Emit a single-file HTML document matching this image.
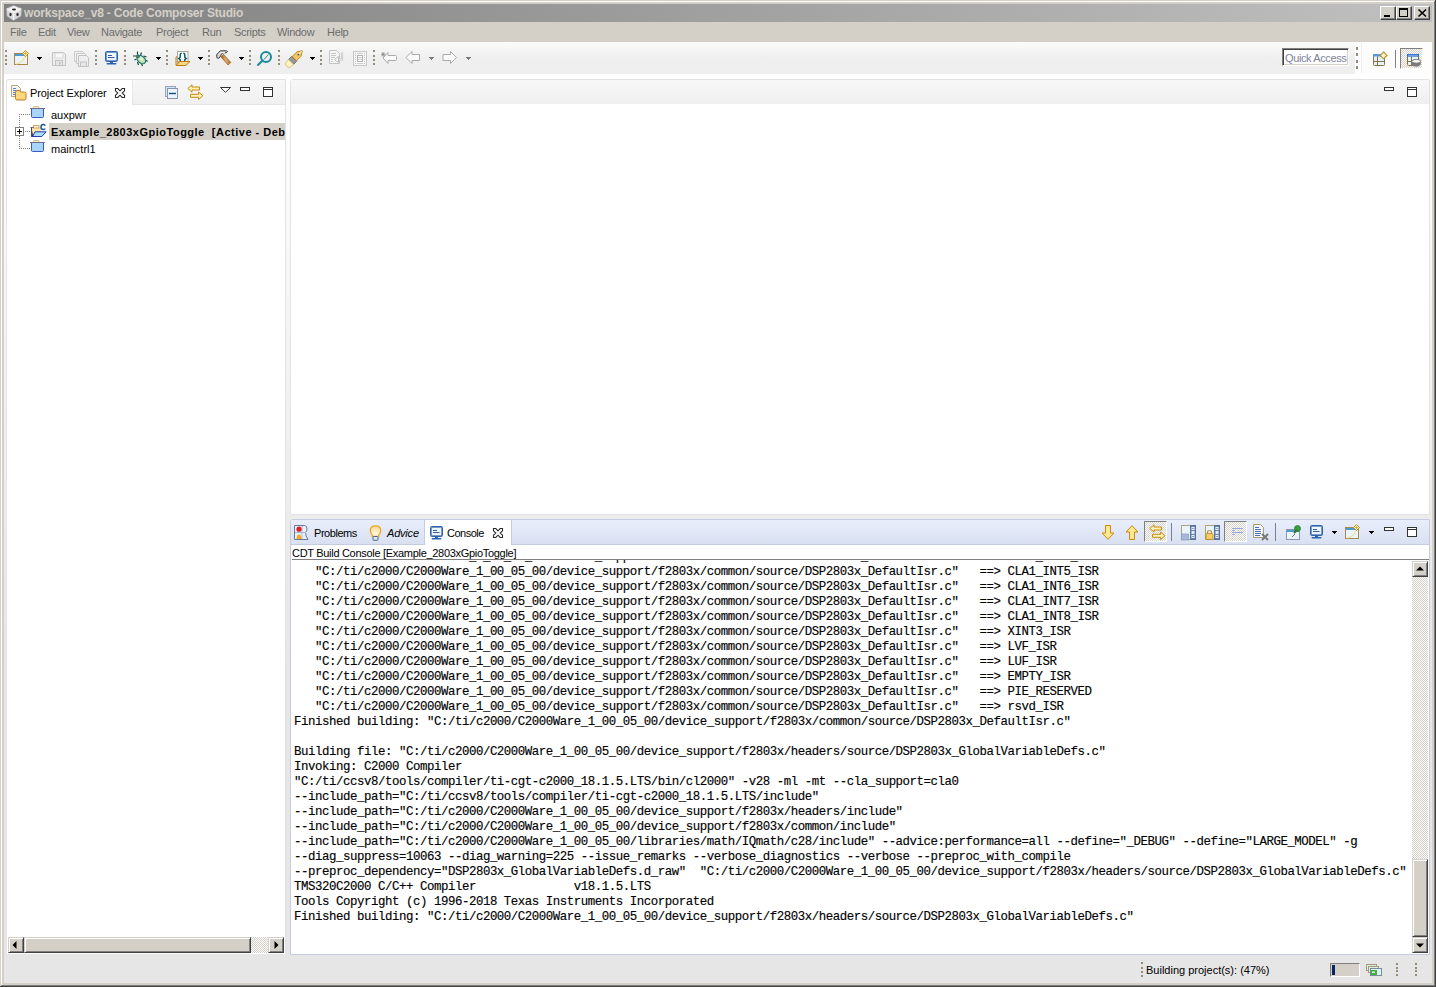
<!DOCTYPE html>
<html><head><meta charset="utf-8">
<style>
*{box-sizing:border-box}
html,body{margin:0;padding:0}
body{width:1436px;height:987px;overflow:hidden;position:relative;background:#d4d0c8;font-family:"Liberation Sans",sans-serif;}
.a{position:absolute}
.t{position:absolute;white-space:pre;line-height:1}
svg{position:absolute;overflow:visible}
.grip{position:absolute;width:2px;height:16px;background:linear-gradient(#948c7a 0 2px,transparent 2px 5px,#948c7a 5px 7px,transparent 7px 9px,#948c7a 9px 11px,transparent 11px 13px,#948c7a 13px 15px,transparent 15px)}
.dd{position:absolute;width:5px;height:3px;--c:#000;background:linear-gradient(var(--c),var(--c)) 0 0/5px 1px no-repeat,linear-gradient(var(--c),var(--c)) 1px 1px/3px 1px no-repeat,linear-gradient(var(--c),var(--c)) 2px 2px/1px 1px no-repeat}
.ddg{--c:#7a7a7a}
.cap{position:absolute;width:16px;height:14px;background:#d4d0c8;border-top:1px solid #fff;border-left:1px solid #fff;border-right:1px solid #404040;border-bottom:1px solid #404040;box-shadow:inset -1px -1px 0 #808080}
.sb{position:absolute;background:#d4d0c8;border-top:1px solid #d4d0c8;border-left:1px solid #d4d0c8;border-right:1px solid #404040;border-bottom:1px solid #404040;box-shadow:inset 1px 1px 0 #fff,inset -1px -1px 0 #808080}
.dither{background-color:#fff;background-image:linear-gradient(45deg,#d4d0c8 25%,transparent 25%,transparent 75%,#d4d0c8 75%),linear-gradient(45deg,#d4d0c8 25%,transparent 25%,transparent 75%,#d4d0c8 75%);background-size:2px 2px;background-position:0 0,1px 1px}
.mono{font-family:"Liberation Mono",monospace;font-size:12.4px;letter-spacing:-0.44px;color:#000;-webkit-text-stroke:0.15px #000}
.g2{height:13px;background:linear-gradient(#948c7a 0 2px,transparent 2px 4px,#948c7a 4px 6px,transparent 6px 7px,#948c7a 7px 9px,transparent 9px 11px,#948c7a 11px 13px)}
.cl{position:absolute;left:294px;height:15px;line-height:15px;white-space:pre}
</style></head><body>

<!-- window frame -->
<div class="a" style="left:1px;top:1px;width:1433px;height:1px;background:#fff"></div>
<div class="a" style="left:1px;top:1px;width:1px;height:984px;background:#fff"></div>
<div class="a" style="left:1434px;top:1px;width:1px;height:985px;background:#808080"></div>
<div class="a" style="left:1px;top:985px;width:1434px;height:1px;background:#808080"></div>
<div class="a" style="left:1435px;top:0;width:1px;height:987px;background:#404040"></div>
<div class="a" style="left:0;top:986px;width:1436px;height:1px;background:#404040"></div>

<!-- title bar -->
<div class="a" style="left:4px;top:4px;width:1428px;height:18px;background:linear-gradient(90deg,#808080,#c0c0c0)"></div>
<svg style="left:6px;top:5px" width="16" height="16" viewBox="0 0 16 16">
 <path d="M7.5 0.5 L15.5 3.5 L15 11 L7.5 15.5 L1 11 L0.5 3.5 Z" fill="#dadada" stroke="#b0b0b0" stroke-width="0.6"/><path d="M7.5 7.5 L7.5 15 M1 3.8 L7.5 7.5 L15.2 3.8" stroke="#f4f4f4" stroke-width="1.2" fill="none"/>
 <path d="M8 1 L15 4.5 L8 8 L1 4.5 Z" fill="#f4f4f4"/>
 <ellipse cx="8" cy="4.4" rx="2" ry="1" fill="#222"/>
 <ellipse cx="4.5" cy="9.5" rx="1.2" ry="1.8" fill="#333"/>
 <ellipse cx="11.5" cy="9.5" rx="1.2" ry="1.8" fill="#333"/>
</svg>
<div class="t" style="left:24px;top:7px;font-weight:bold;font-size:12px;letter-spacing:-0.2px;color:#d4d0c8">workspace_v8 - Code Composer Studio</div>
<div class="cap" style="left:1380px;top:6px"><div class="a" style="left:3px;top:8px;width:6px;height:2px;background:#000"></div></div>
<div class="cap" style="left:1396px;top:6px"><div class="a" style="left:2px;top:1px;width:9px;height:9px;border:1px solid #000;border-top-width:2px"></div></div>
<div class="cap" style="left:1414px;top:6px"><svg style="left:3px;top:2px" width="9" height="8" viewBox="0 0 9 8"><path d="M0.5 0.5L8 7.5M8 0.5L0.5 7.5" stroke="#000" stroke-width="1.6"/></svg></div>

<!-- menu bar -->
<div class="t" style="left:10px;top:27px;font-size:11px;letter-spacing:-0.3px;color:#6d6d6d">File</div>
<div class="t" style="left:38px;top:27px;font-size:11px;letter-spacing:-0.3px;color:#6d6d6d">Edit</div>
<div class="t" style="left:67px;top:27px;font-size:11px;letter-spacing:-0.3px;color:#6d6d6d">View</div>
<div class="t" style="left:101px;top:27px;font-size:11px;letter-spacing:-0.3px;color:#6d6d6d">Navigate</div>
<div class="t" style="left:156px;top:27px;font-size:11px;letter-spacing:-0.3px;color:#6d6d6d">Project</div>
<div class="t" style="left:202px;top:27px;font-size:11px;letter-spacing:-0.3px;color:#6d6d6d">Run</div>
<div class="t" style="left:234px;top:27px;font-size:11px;letter-spacing:-0.3px;color:#6d6d6d">Scripts</div>
<div class="t" style="left:277px;top:27px;font-size:11px;letter-spacing:-0.3px;color:#6d6d6d">Window</div>
<div class="t" style="left:327px;top:27px;font-size:11px;letter-spacing:-0.3px;color:#6d6d6d">Help</div>

<!-- toolbar -->
<div class="a" style="left:4px;top:42px;width:1351px;height:32px;background:linear-gradient(#fbfbfb,#efefef 50%,#efefef)"></div>
<div class="a" style="left:1355px;top:42px;width:77px;height:32px;background:#fdfdfd"></div>
<div class="a" style="left:1361px;top:43px;width:1px;height:30px;background:#eeeeee"></div>
<!-- toolbar items -->
<div class="grip" style="left:5px;top:50px"></div>
<svg style="left:14px;top:50px" width="16" height="16" viewBox="0 0 16 16">
 <rect x="0.5" y="3.5" width="13" height="11" fill="#eaf4fc" stroke="#a8894a"/>
 <rect x="1" y="4" width="12" height="2" fill="#4a9ad8"/>
 <path d="M2 14 Q9 13 11 6" stroke="#f0e0a0" stroke-width="1.2" fill="none"/>
 <path d="M11.5 0.5 L14.5 3.5 L11.5 6.5 L8.5 3.5 Z" fill="#fff5c0" stroke="#b8902a"/>
 <path d="M11.5 2 V5 M10 3.5 H13" stroke="#d4a030" stroke-width="0.8"/>
</svg>
<div class="dd" style="left:37px;top:57px"></div>
<svg style="left:51px;top:51px" width="16" height="16" viewBox="0 0 16 16">
 <path d="M1.5 1.5 H12.5 L14.5 3.5 V14.5 H1.5 Z" fill="#eeeeee" stroke="#c2c2c2"/>
 <rect x="4" y="2" width="8" height="5" fill="#f8f8f8" stroke="#cfcfcf" stroke-width="0.7"/>
 <rect x="4.5" y="9.5" width="7" height="5" fill="#e6e6e6" stroke="#c2c2c2"/>
 <rect x="8" y="11" width="1.5" height="2.5" fill="#c2c2c2"/>
</svg>
<svg style="left:74px;top:51px" width="16" height="16" viewBox="0 0 16 16">
 <path d="M0.5 0.5 H8.5 L10.5 2.5 V10.5 H0.5 Z" fill="#f2f2f2" stroke="#cccccc"/>
 <path d="M2.5 2.5 H10.5 L12.5 4.5 V12.5 H2.5 Z" fill="#f2f2f2" stroke="#c8c8c8"/>
 <path d="M4.5 4.5 H12.5 L14.5 6.5 V15.5 H4.5 Z" fill="#eeeeee" stroke="#c2c2c2"/>
 <rect x="6.5" y="11" width="6" height="4.5" fill="#e6e6e6" stroke="#c2c2c2"/>
</svg>
<div class="grip" style="left:95px;top:50px"></div>
<svg style="left:105px;top:51px" width="14" height="14" viewBox="0 0 14 14">
 <rect x="0.75" y="0.75" width="11.5" height="9.5" rx="1.5" fill="#eaf6fe" stroke="#2a62b0" stroke-width="1.5"/>
 <rect x="1.5" y="1.5" width="10" height="8" fill="none" stroke="#7890b8" stroke-width="0.6"/>
 <rect x="3" y="4" width="4" height="1" fill="#3a5aa0"/>
 <rect x="3" y="6" width="6.5" height="1" fill="#3a5aa0"/>
 <rect x="5" y="10.5" width="3" height="1.5" fill="#2a62b0"/>
 <rect x="1.5" y="12" width="10" height="1.6" rx="0.8" fill="#2a62b0"/>
</svg>
<div class="grip" style="left:124px;top:50px"></div>
<svg style="left:133px;top:51px" width="16" height="16" viewBox="0 0 16 16">
 <defs><radialGradient id="bugg" cx="0.45" cy="0.45" r="0.6"><stop offset="0" stop-color="#f0f8e8"/><stop offset="1" stop-color="#98d080"/></radialGradient></defs>
 <path d="M4.5 0.5 V3.5 M8.5 1.5 L7.5 4.5 M0 5 H3 M1.5 9 L3.5 8 M10.5 5 L13.5 6 M12.5 9 L14.5 10.5 M4.5 11 L5.5 14 M8.5 12.5 L9.5 15" stroke="#1e4a36" stroke-width="1.2" fill="none"/>
 <ellipse cx="8.3" cy="8.6" rx="4.9" ry="3.4" transform="rotate(42 8.3 8.6)" fill="url(#bugg)" stroke="#1a6a80" stroke-width="1.1"/>
 <circle cx="4.9" cy="5.3" r="1.6" fill="#3a8a50" stroke="#1a6a80" stroke-width="0.8"/>
</svg>
<div class="dd" style="left:156px;top:57px"></div>
<div class="grip" style="left:166px;top:50px"></div>
<svg style="left:175px;top:51px" width="16" height="16" viewBox="0 0 16 16">
 <path d="M1 14.5 V6.5 Q1 5.5 2 5.5 H3 V14.5 Z" fill="#fbe49a" stroke="#c07a20" stroke-width="1"/>
 <rect x="2.5" y="0.5" width="10.5" height="10" fill="#fff" stroke="#a8a898"/>
 <path d="M6.7 2.3 Q5.2 2.3 5.2 3.8 V6.2 L3.8 7.4 L5.2 8.6 V10.5 M8.3 2.3 Q9.8 2.3 9.8 3.8 V6.2 L11.2 7.4 L9.8 8.6 V10.5" stroke="#0a5a72" stroke-width="1.5" fill="none"/>
 <path d="M1.5 14.5 H10.8 L15 10.5 H4.5 Z" fill="#f8d880" stroke="#c07a18" stroke-width="1"/>
</svg>
<div class="dd" style="left:198px;top:57px"></div>
<div class="grip" style="left:208px;top:50px"></div>
<svg style="left:216px;top:50px" width="16" height="16" viewBox="0 0 16 16">
 <defs><linearGradient id="hdl" x1="0" y1="0" x2="1" y2="0"><stop offset="0" stop-color="#9a5a20"/><stop offset="0.5" stop-color="#e0b070"/><stop offset="1" stop-color="#a86a28"/></linearGradient></defs>
 <path d="M5 7 L7.5 4.2 L14.8 12.5 L12 15 Z" fill="url(#hdl)" stroke="#8a5018" stroke-width="0.6"/>
 <path d="M4.3 0.8 H10.6 L11.6 1.6 L10.2 2.8 H6.8 L5.6 4.2 L4 7 L2.5 8.4 L1.2 8 L0.6 6.5 L0.8 4.5 L2.6 2.5 Z" fill="#cfcfcf" stroke="#3a3a3a" stroke-width="1"/>
 <path d="M3 4.5 L5 2.5 H9" stroke="#f4f4f4" stroke-width="1" fill="none"/>
</svg>
<div class="dd" style="left:239px;top:57px"></div>
<div class="grip" style="left:249px;top:50px"></div>
<svg style="left:257px;top:51px" width="16" height="16" viewBox="0 0 16 16">
 <circle cx="9" cy="6" r="5" fill="none" stroke="#1a8a9a" stroke-width="2"/>
 <path d="M5.5 9.5 L1 14" stroke="#1a8a9a" stroke-width="2" stroke-linecap="round"/>
 <path d="M7 8.5 L11.5 3.5" stroke="#1a8a9a" stroke-width="1"/>
</svg>
<div class="grip" style="left:278px;top:50px"></div>
<svg style="left:286px;top:50px" width="17" height="17" viewBox="0 0 17 17">
 <g transform="rotate(45 8.5 8.5)">
  <path d="M8.5 -2.5 L11.5 2 V9 H5.5 V2 Z" fill="#f6c458" stroke="#b88a30" stroke-width="0.9"/>
  <path d="M8.5 -1.5 V3" stroke="#fff2c0" stroke-width="1"/>
  <circle cx="8.5" cy="3" r="0.9" fill="#2a5aa0"/>
  <rect x="5" y="9" width="7" height="4.5" fill="#9a9a9a" stroke="#6f6a60" stroke-width="0.8"/>
  <path d="M5.2 13.5 H11.8 V17 Q11.8 19.5 8.5 19.5 Q5.2 19.5 5.2 17 Z" fill="#fff6c8" stroke="#d8b860" stroke-width="0.8"/>
 </g>
</svg>
<div class="dd" style="left:310px;top:57px"></div>
<div class="grip" style="left:320px;top:50px"></div>
<svg style="left:329px;top:50px" width="16" height="16" viewBox="0 0 16 16">
 <path d="M0.5 0.5 H7.5 L10.5 3.5 V13.5 H0.5 Z" fill="#f6f6f6" stroke="#c4c4c4"/>
 <path d="M2 3.5 H7 M2 5.5 H7 M2 7.5 H6 M2 9.5 H4 M2 11.5 H4" stroke="#c4c4c4" stroke-width="0.9"/>
 <path d="M13 2.5 V9.5 H8.5" stroke="#c4c4c4" stroke-width="2.2" fill="none"/>
 <path d="M13 2.5 V9.5 H8.5" stroke="#fbfbfb" stroke-width="0.6" fill="none"/>
 <path d="M9.5 6.5 L5.5 9.5 L9.5 12.5 Z" fill="#fafafa" stroke="#c0c0c0" stroke-linejoin="round"/>
</svg>
<svg style="left:353px;top:51px" width="14" height="15" viewBox="0 0 14 15">
 <rect x="0.5" y="0.5" width="13" height="14" fill="#f6f6f6" stroke="#c8c8c8"/>
 <path d="M2.5 2 V13" stroke="#c4c4c4" stroke-dasharray="1 1"/>
 <path d="M11.5 2 V13" stroke="#c4c4c4" stroke-dasharray="1 1"/>
 <path d="M4 2.5 H10 M4 12.5 H10" stroke="#c8c8c8" stroke-width="0.9"/>
 <rect x="4.5" y="4.5" width="5" height="6" fill="#fafafa" stroke="#b4b4b4"/>
 <path d="M5 6.5 H9 M5 8.5 H9" stroke="#c0c0c0" stroke-width="0.8"/>
</svg>
<div class="grip" style="left:373px;top:50px"></div>
<svg style="left:381px;top:50px" width="16" height="16" viewBox="0 0 16 16">
 <path d="M2 8 L7 2.5 V5.5 H14.5 Q15.5 5.5 15.5 6.5 V9.5 Q15.5 10.5 14.5 10.5 H7 V13.5 Z" fill="#fafafa" stroke="#aaaaaa" stroke-linejoin="round"/>
 <path d="M2.2 2 V6.8 M0 4.4 H4.4 M0.6 2.6 L3.8 6.2 M3.8 2.6 L0.6 6.2" stroke="#8a8a8a" stroke-width="0.8"/>
</svg>
<svg style="left:405px;top:50px" width="16" height="16" viewBox="0 0 16 16">
 <path d="M7 1.5 L1 7.5 L7 13.5 V10.5 H14.5 V4.5 H7 Z" fill="#fafafa" stroke="#aaaaaa" stroke-linejoin="round"/>
</svg>
<div class="dd ddg" style="left:429px;top:57px"></div>
<svg style="left:442px;top:50px" width="16" height="16" viewBox="0 0 16 16">
 <path d="M8.5 1.5 L14.5 7.5 L8.5 13.5 V10.5 H1 V4.5 H8.5 Z" fill="#fafafa" stroke="#aaaaaa" stroke-linejoin="round"/>
</svg>
<div class="dd ddg" style="left:466px;top:57px"></div>

<!-- quick access + perspectives -->
<div class="a" style="left:1282px;top:48px;width:67px;height:18px;background:#fff;border-top:1px solid #808080;border-left:1px solid #808080;border-right:1px solid #fff;border-bottom:1px solid #fff;box-shadow:inset 1px 1px 0 #404040,inset -1px -1px 0 #d4d0c8"></div>
<div class="t" style="left:1285px;top:53px;font-size:11px;letter-spacing:-0.38px;color:#7d8399">Quick Access</div>
<div class="a" style="left:1356px;top:47px;width:2px;height:22px;background:linear-gradient(#948c7a 0 3px,transparent 3px 6px,#948c7a 6px 9px,transparent 9px 13px,#948c7a 13px 16px,transparent 16px 19px,#948c7a 19px 22px)"></div>
<svg style="left:1372px;top:51px" width="16" height="16" viewBox="0 0 16 16">
 <rect x="1.5" y="3.5" width="11" height="11" rx="1" fill="#e4f4fc" stroke="#8a7040"/>
 <rect x="1" y="3" width="12" height="2.5" fill="#5a9ad8"/>
 <path d="M5.5 5.5 V14 M2 10.5 H12.5" stroke="#8a7040"/>
 <path d="M11.6 1 L15 4.4 L11.6 7.8 L8.2 4.4 Z" fill="#fff6d0" stroke="#c09028" stroke-width="1.1"/>
</svg>
<div class="a" style="left:1395px;top:50px;width:1px;height:18px;background:#808080"></div>
<div class="a dither" style="left:1400px;top:48px;width:23px;height:21px;border-top:1px solid #808080;border-left:1px solid #808080;border-right:1px solid #fff;border-bottom:1px solid #fff"></div>
<svg style="left:1406px;top:51px" width="16" height="17" viewBox="0 0 16 17">
 <rect x="1.5" y="3.5" width="11" height="11" rx="1" fill="#e4f4fc" stroke="#8a7040"/>
 <rect x="1" y="3" width="12" height="2.6" fill="#2a68c8"/>
 <path d="M2 4.3 H12" stroke="#a8d0f8" stroke-width="0.7"/>
 <path d="M5.5 5.5 V14 M2 10.5 H12.5" stroke="#8a7040"/>
 <path d="M5.8 10.5 V13.5 Q10.3 18 14.8 13.5 V10.5 Z" fill="#7a7a7a"/>
 <ellipse cx="10.3" cy="10.3" rx="4.5" ry="1.9" fill="#f4f4f4" stroke="#707070" stroke-width="0.9"/>
</svg>


<!-- workbench -->
<div class="a" style="left:4px;top:74px;width:1428px;height:909px;background:linear-gradient(#ffffff,#e6e6e6 65%,#e6e6e6)"></div>

<!-- LEFT PANEL: Project Explorer -->
<div class="a" style="left:6px;top:79px;width:280px;height:875px;background:#fff;border:1px solid #e3e3e3;border-bottom-color:#fff;border-top-left-radius:3px"></div>
<div class="a" style="left:132px;top:80px;width:153px;height:25px;background:linear-gradient(#f7f7f7,#f0f0f0);border-left:1px solid #e6e6e6;border-bottom:1px solid #e4e4e4"></div>
<svg style="left:11px;top:85px" width="16" height="16" viewBox="0 0 16 16">
 <path d="M0.5 0.5 H6.5 L9.5 3.5 V11.5 H0.5 Z" fill="#f4f6fb" stroke="#b4a878"/>
 <path d="M2 3.5 H5 M2 5.5 H6 M2 7.5 H5 M2 9.5 H5" stroke="#5a80c8" stroke-width="1"/>
 <path d="M4.5 7.5 Q4.5 5.5 6 5.5 H8 Q9 5.5 9.5 7 H13.5 Q15 7 15 8.5 V13.5 Q15 15 13.5 15 H6 Q4.5 15 4.5 13.5 Z" fill="#fcd87a" stroke="#c07a30"/>
</svg>
<div class="t" style="left:30px;top:88px;font-size:11px;letter-spacing:-0.1px;color:#000">Project Explorer</div>
<svg style="left:115px;top:88px" width="10" height="10" viewBox="0 0 10 10">
 <path d="M0.5 0.5 H2.8 L5 2.8 L7.2 0.5 H9.5 V2.8 L7.2 5 L9.5 7.2 V9.5 H7.2 L5 7.2 L2.8 9.5 H0.5 V7.2 L2.8 5 L0.5 2.8 Z" fill="#fff" stroke="#2a2a2a" stroke-width="1.1" stroke-linejoin="miter"/>
</svg>
<svg style="left:165px;top:86px" width="14" height="14" viewBox="0 0 14 14">
 <rect x="0.5" y="0.5" width="10" height="10" fill="#cfe8fb" stroke="#9aa2bc"/>
 <rect x="2.5" y="2.5" width="10" height="10" fill="#e8f6fe" stroke="#8a92ac"/>
 <path d="M4 7.5 H11" stroke="#1a4a80" stroke-width="1.4"/>
</svg>
<svg style="left:187px;top:84px" width="17" height="17" viewBox="0 0 17 17">
 <path d="M0.8 4.5 L5 0.8 V3 H12.5 V6 H5 V8.2 Z" fill="#fdf0b8" stroke="#c88a10" stroke-linejoin="round" stroke-width="1"/>
 <path d="M15.8 11.8 L11.6 15.5 V13.3 H3.5 V10.3 H11.6 V8 Z" fill="#fdf0b8" stroke="#c88a10" stroke-linejoin="round" stroke-width="1"/>
</svg>
<svg style="left:220px;top:87px" width="11" height="6" viewBox="0 0 11 6"><path d="M0.5 0.5 H10.5 L5.5 5.3 Z" fill="#fff" stroke="#333"/></svg>
<div class="a" style="left:240px;top:87px;width:10px;height:4px;border:1px solid #333;background:#fff"></div>
<div class="a" style="left:263px;top:87px;width:10px;height:10px;border:1px solid #333;background:#fff"><div class="a" style="left:0;top:1px;width:8px;height:1px;background:#333"></div></div>

<!-- tree -->
<div class="a" style="left:19px;top:114px;width:1px;height:35px;background:repeating-linear-gradient(#808080 0 1px,transparent 1px 2px)"></div>
<div class="a" style="left:19px;top:114px;width:11px;height:1px;background:repeating-linear-gradient(90deg,#808080 0 1px,transparent 1px 2px)"></div>
<div class="a" style="left:25px;top:131px;width:5px;height:1px;background:repeating-linear-gradient(90deg,#808080 0 1px,transparent 1px 2px)"></div>
<div class="a" style="left:19px;top:148px;width:11px;height:1px;background:repeating-linear-gradient(90deg,#808080 0 1px,transparent 1px 2px)"></div>
<div class="a" style="left:15px;top:127px;width:9px;height:9px;border:1px solid #808080;background:#fff"></div>
<div class="a" style="left:17px;top:131px;width:5px;height:1px;background:#000"></div>
<div class="a" style="left:19px;top:129px;width:1px;height:5px;background:#000"></div>

<svg style="left:30px;top:106px" width="16" height="13" viewBox="0 0 16 13">
 <rect x="3.5" y="0.5" width="5.5" height="2.5" rx="1" fill="#fff0c0" stroke="#c8b08a" stroke-width="0.9"/>
 <path d="M1.5 2.5 H13.5 V10.5 Q13.5 11.5 12.5 11.5 H2.5 Q1.5 11.5 1.5 10.5 Z" fill="#a8d6f8" stroke="#3a5ac0" stroke-width="1"/>
 <path d="M0 2.5 H15" stroke="#706a90" stroke-width="1"/>
</svg>
<div class="t" style="left:51px;top:110px;font-size:11px;color:#000">auxpwr</div>

<div class="a" style="left:49px;top:123px;width:236px;height:17px;background:#d4d0c8"></div>
<svg style="left:30px;top:124px" width="17" height="14" viewBox="0 0 17 14">
 <rect x="2" y="3.5" width="9" height="9" fill="#fde7a6"/>
 <rect x="3.5" y="1.5" width="5.5" height="2.5" fill="#fff4d0" stroke="#d0a868" stroke-width="1"/>
 <path d="M0.5 3.5 H3.5" stroke="#6a5a90" stroke-width="1"/>
 <path d="M1.5 3.5 V12.5 H3" stroke="#3040b0" stroke-width="1"/>
 <path d="M2.5 12.5 H11.8 L16.2 7.8 H5 Z" fill="#a8dcf8" stroke="#2a3ab0" stroke-width="1"/>
 <path d="M15.3 1.6 Q14.5 0.6 13.2 0.6 Q11 0.6 11 3.1 Q11 5.6 13.2 5.6 Q14.5 5.6 15.3 4.6" fill="none" stroke="#1a5a9a" stroke-width="1.5"/>
</svg>
<div class="a" style="left:51px;top:123px;width:234px;height:17px;overflow:hidden"><div class="t" style="left:0;top:4px;font-size:11px;font-weight:bold;letter-spacing:0.5px;color:#000">Example_2803xGpioToggle  [Active - Debug]</div></div>

<svg style="left:30px;top:140px" width="16" height="13" viewBox="0 0 16 13">
 <rect x="3.5" y="0.5" width="5.5" height="2.5" rx="1" fill="#fff0c0" stroke="#c8b08a" stroke-width="0.9"/>
 <path d="M1.5 2.5 H13.5 V10.5 Q13.5 11.5 12.5 11.5 H2.5 Q1.5 11.5 1.5 10.5 Z" fill="#a8d6f8" stroke="#3a5ac0" stroke-width="1"/>
 <path d="M0 2.5 H15" stroke="#706a90" stroke-width="1"/>
</svg>
<div class="t" style="left:51px;top:144px;font-size:11px;color:#000">mainctrl1</div>

<!-- h scrollbar -->
<div class="a dither" style="left:8px;top:937px;width:276px;height:16px"></div>
<div class="sb" style="left:8px;top:937px;width:16px;height:16px"><svg style="left:3px;top:3px" width="5" height="8" viewBox="0 0 5 8"><path d="M4.5 0 V8 L0.5 4 Z" fill="#000"/></svg></div>
<div class="sb" style="left:24px;top:937px;width:227px;height:16px"></div>
<div class="sb" style="left:268px;top:937px;width:16px;height:16px"><svg style="left:5px;top:3px" width="5" height="8" viewBox="0 0 5 8"><path d="M0.5 0 V8 L4.5 4 Z" fill="#000"/></svg></div>

<!-- EDITOR PANEL -->
<div class="a" style="left:290px;top:79px;width:1140px;height:436px;background:#fff;border:1px solid #e3e3e3;border-top-left-radius:3px;border-top-right-radius:2px"></div>
<div class="a" style="left:291px;top:80px;width:1138px;height:24px;background:linear-gradient(#f8f8f8,#efefef)"></div>
<div class="a" style="left:1384px;top:87px;width:10px;height:4px;border:1px solid #333;background:#fff"></div>
<div class="a" style="left:1407px;top:87px;width:10px;height:10px;border:1px solid #333;background:#fff"><div class="a" style="left:0;top:1px;width:8px;height:1px;background:#333"></div></div>

<!-- CONSOLE PANEL -->
<div class="a" style="left:290px;top:519px;width:1140px;height:436px;background:#fff;border:1px solid #c6cce0;border-top-left-radius:3px"></div>
<div class="a" style="left:291px;top:520px;width:134px;height:25px;background:linear-gradient(#e8eefc,#d9e0f1);border-right:1px solid #c6cce0;border-bottom:1px solid #c6cce0"></div>
<div class="a" style="left:511px;top:520px;width:918px;height:25px;background:linear-gradient(#e8eefc,#d9e0f1);border-left:1px solid #c6cce0;border-bottom:1px solid #c6cce0"></div>
<svg style="left:294px;top:525px" width="16" height="16" viewBox="0 0 16 16">
 <path d="M0.5 0.5 H10.5 Q13 0.5 13 4 Q13 6 11.5 7.5 Q11.5 11 14 14.5 H0.5 Z" fill="#e6f2fb" stroke="#6a7a98"/>
 <path d="M1 7.5 H12 M8 1 V14" stroke="#a8b8d8"/>
 <circle cx="5" cy="4.2" r="2.6" fill="#e02020"/>
 <path d="M2.5 14 Q2.5 9.5 5 9.5 Q7.5 9.5 7.5 14 Z" fill="#f8a820"/>
</svg>
<div class="t" style="left:314px;top:528px;font-size:11px;letter-spacing:-0.45px;color:#000">Problems</div>
<svg style="left:369px;top:525px" width="13" height="16" viewBox="0 0 13 16">
 <defs><linearGradient id="bulb" x1="0" y1="0" x2="0" y2="1"><stop offset="0" stop-color="#fcd890"/><stop offset="1" stop-color="#fffef0"/></linearGradient></defs>
 <path d="M6.5 0.8 Q11.7 0.8 11.7 5.6 Q11.7 8 9.7 10 V11.3 H3.3 V10 Q1.3 8 1.3 5.6 Q1.3 0.8 6.5 0.8 Z" fill="url(#bulb)" stroke="#f0a420" stroke-width="1.3"/>
 <rect x="4" y="11.5" width="5" height="3.8" rx="0.8" fill="#dfe6ee" stroke="#4a6890" stroke-width="1"/>
</svg>
<div class="t" style="left:387px;top:528px;font-size:11px;font-style:italic;letter-spacing:-0.2px;color:#000">Advice</div>
<svg style="left:430px;top:526px" width="14" height="14" viewBox="0 0 14 14">
 <rect x="0.75" y="0.75" width="11.5" height="9.5" rx="1.5" fill="#eaf6fe" stroke="#2a62b0" stroke-width="1.5"/>
 <rect x="1.5" y="1.5" width="10" height="8" fill="none" stroke="#7890b8" stroke-width="0.6"/>
 <rect x="3" y="4" width="4" height="1" fill="#3a5aa0"/>
 <rect x="3" y="6" width="6.5" height="1" fill="#3a5aa0"/>
 <rect x="5" y="10.5" width="3" height="1.5" fill="#2a62b0"/>
 <rect x="1.5" y="12" width="10" height="1.6" rx="0.8" fill="#2a62b0"/>
</svg>
<div class="t" style="left:447px;top:528px;font-size:11px;letter-spacing:-0.5px;color:#000">Console</div>
<svg style="left:493px;top:528px" width="10" height="10" viewBox="0 0 10 10">
 <path d="M0.5 0.5 H2.8 L5 2.8 L7.2 0.5 H9.5 V2.8 L7.2 5 L9.5 7.2 V9.5 H7.2 L5 7.2 L2.8 9.5 H0.5 V7.2 L2.8 5 L0.5 2.8 Z" fill="#fff" stroke="#2a2a2a" stroke-width="1.1" stroke-linejoin="miter"/>
</svg>

<!-- console toolbar -->
<svg style="left:1101px;top:525px" width="14" height="15" viewBox="0 0 14 15">
 <path d="M4.5 0.5 H9.5 V8 H13 L7 14.3 L1 8 H4.5 Z" fill="#fde890" stroke="#c88a10" stroke-linejoin="round"/>
</svg>
<svg style="left:1125px;top:525px" width="14" height="15" viewBox="0 0 14 15">
 <path d="M4.5 14.5 H9.5 V7 H13 L7 0.7 L1 7 H4.5 Z" fill="#fde890" stroke="#c88a10" stroke-linejoin="round"/>
</svg>
<div class="a dither" style="left:1144px;top:521px;width:23px;height:21px;border-top:1px solid #808080;border-left:1px solid #808080;border-right:1px solid #fff;border-bottom:1px solid #fff"></div>
<svg style="left:1149px;top:524px" width="17" height="17" viewBox="0 0 17 17">
 <path d="M0.8 4.5 L5 0.8 V3 H12.5 V6 H5 V8.2 Z" fill="#fdf0b8" stroke="#c88a10" stroke-linejoin="round"/>
 <path d="M15.8 11.8 L11.6 15.5 V13.3 H3.5 V10.3 H11.6 V8 Z" fill="#fdf0b8" stroke="#c88a10" stroke-linejoin="round"/>
</svg>
<div class="a" style="left:1171px;top:523px;width:1px;height:18px;background:#808080"></div>
<svg style="left:1181px;top:525px" width="16" height="16" viewBox="0 0 16 16">
 <rect x="0.5" y="0.5" width="9" height="14" fill="#e8f4fc" stroke="#b0a478"/>
 <rect x="9.5" y="0.5" width="5" height="14" fill="#6a84b0" stroke="#5a70a0"/>
 <rect x="10.5" y="2" width="3" height="3" fill="#f4f8fc"/><rect x="10.5" y="6" width="3" height="3" fill="#e0e8f4"/><rect x="10.5" y="10" width="3" height="3" fill="#f4f8fc"/>
 <rect x="11.5" y="3" width="1" height="1" fill="#2a4a80"/><rect x="11.5" y="11" width="1" height="1" fill="#2a4a80"/>
 <rect x="0.5" y="9" width="7" height="6" fill="#a8b8d8" stroke="#8898b8" stroke-width="0.7"/>
</svg>
<svg style="left:1205px;top:525px" width="16" height="16" viewBox="0 0 16 16">
 <rect x="0.5" y="0.5" width="9" height="14" fill="#e8f4fc" stroke="#b0a478"/>
 <rect x="9.5" y="0.5" width="5" height="14" fill="#6a84b0" stroke="#5a70a0"/>
 <rect x="10.5" y="2" width="3" height="3" fill="#f4f8fc"/><rect x="10.5" y="6" width="3" height="3" fill="#e0e8f4"/><rect x="10.5" y="10" width="3" height="3" fill="#f4f8fc"/>
 <rect x="11.5" y="3" width="1" height="1" fill="#2a4a80"/><rect x="11.5" y="11" width="1" height="1" fill="#2a4a80"/>
 <path d="M2.5 9 V7.5 Q2.5 5.5 4.5 5.5 Q6.5 5.5 6.5 7.5 V9" fill="none" stroke="#c09030" stroke-width="1.2"/>
 <rect x="1" y="8.5" width="7" height="6" rx="1" fill="#f8d060" stroke="#b88020" stroke-width="0.8"/>
</svg>
<div class="a dither" style="left:1224px;top:521px;width:23px;height:21px;border-top:1px solid #808080;border-left:1px solid #808080;border-right:1px solid #fff;border-bottom:1px solid #fff"></div>
<svg style="left:1229px;top:526px" width="14" height="14" viewBox="0 0 14 14">
 <path d="M3 2.5 H14 M3 6.5 H14 M3 4.5 H6 M3 8.5 H6" stroke="#98a8d8" stroke-width="1"/>
</svg>
<svg style="left:1253px;top:524px" width="16" height="17" viewBox="0 0 16 17">
 <path d="M0.5 0.5 H7.5 L10.5 3.5 V13.5 H0.5 Z" fill="#f6f8fc" stroke="#a89a70"/>
 <path d="M2 3.5 H6 M2 5.5 H8 M2 7.5 H8 M2 9.5 H8 M2 11.5 H7" stroke="#4a70b8" stroke-width="1"/>
 <path d="M9 10 L15 16 M15 10 L9 16" stroke="#7a7a7a" stroke-width="2"/>
</svg>
<div class="a" style="left:1275px;top:523px;width:1px;height:18px;background:#808080"></div>
<svg style="left:1286px;top:525px" width="16" height="16" viewBox="0 0 16 16">
 <rect x="0.5" y="4.5" width="13" height="10" fill="#eaf2fa" stroke="#8a98b0"/>
 <rect x="1" y="5" width="12" height="2" fill="#4a9ad8"/>
 <path d="M6 12 L9 9" stroke="#555" stroke-width="0.8"/>
 <circle cx="11.5" cy="3.5" r="3" fill="#3aa040" stroke="#2a7a30" stroke-width="0.8"/>
 <path d="M8 8 L11 5" stroke="#2a7a30" stroke-width="2"/>
</svg>
<svg style="left:1310px;top:525px" width="14" height="14" viewBox="0 0 14 14">
 <rect x="0.75" y="0.75" width="11.5" height="9.5" rx="1.5" fill="#eaf6fe" stroke="#2a62b0" stroke-width="1.5"/>
 <rect x="1.5" y="1.5" width="10" height="8" fill="none" stroke="#7890b8" stroke-width="0.6"/>
 <rect x="3" y="4" width="4" height="1" fill="#3a5aa0"/>
 <rect x="3" y="6" width="6.5" height="1" fill="#3a5aa0"/>
 <rect x="5" y="10.5" width="3" height="1.5" fill="#2a62b0"/>
 <rect x="1.5" y="12" width="10" height="1.6" rx="0.8" fill="#2a62b0"/>
</svg>
<div class="dd" style="left:1332px;top:531px"></div>
<svg style="left:1345px;top:524px" width="16" height="16" viewBox="0 0 16 16">
 <rect x="0.5" y="3.5" width="13" height="11" fill="#eaf4fc" stroke="#a8894a"/>
 <rect x="1" y="4" width="12" height="2" fill="#4a9ad8"/>
 <path d="M2 14 Q9 13 11 6" stroke="#f0e0a0" stroke-width="1.2" fill="none"/>
 <path d="M11.5 0.5 L14.5 3.5 L11.5 6.5 L8.5 3.5 Z" fill="#fff5c0" stroke="#b8902a"/>
 <path d="M11.5 2 V5 M10 3.5 H13" stroke="#d4a030" stroke-width="0.8"/>
</svg>
<div class="dd" style="left:1369px;top:531px"></div>
<div class="a" style="left:1384px;top:527px;width:10px;height:4px;border:1px solid #333;background:#fff"></div>
<div class="a" style="left:1407px;top:527px;width:10px;height:10px;border:1px solid #333;background:#fff"><div class="a" style="left:0;top:1px;width:8px;height:1px;background:#333"></div></div>

<div class="t" style="left:292px;top:548px;font-size:11px;letter-spacing:-0.3px;color:#000">CDT Build Console [Example_2803xGpioToggle]</div>
<div class="a" style="left:292px;top:559px;width:1137px;height:1px;background:#808080"></div>

<div class="a mono" style="left:291px;top:560px;width:1121px;height:393px;overflow:hidden">
<div class="a" style="left:-291px;top:-560px;width:1436px;height:987px">
<div class="cl" style="top:550px">   "C:/ti/c2000/C2000Ware_1_00_05_00/device_support/f2803x/common/source/DSP2803x_DefaultIsr.c"   ==&gt; CLA1_INT4_ISR</div>
<div class="cl" style="top:565px">   "C:/ti/c2000/C2000Ware_1_00_05_00/device_support/f2803x/common/source/DSP2803x_DefaultIsr.c"   ==&gt; CLA1_INT5_ISR</div>
<div class="cl" style="top:580px">   "C:/ti/c2000/C2000Ware_1_00_05_00/device_support/f2803x/common/source/DSP2803x_DefaultIsr.c"   ==&gt; CLA1_INT6_ISR</div>
<div class="cl" style="top:595px">   "C:/ti/c2000/C2000Ware_1_00_05_00/device_support/f2803x/common/source/DSP2803x_DefaultIsr.c"   ==&gt; CLA1_INT7_ISR</div>
<div class="cl" style="top:610px">   "C:/ti/c2000/C2000Ware_1_00_05_00/device_support/f2803x/common/source/DSP2803x_DefaultIsr.c"   ==&gt; CLA1_INT8_ISR</div>
<div class="cl" style="top:625px">   "C:/ti/c2000/C2000Ware_1_00_05_00/device_support/f2803x/common/source/DSP2803x_DefaultIsr.c"   ==&gt; XINT3_ISR</div>
<div class="cl" style="top:640px">   "C:/ti/c2000/C2000Ware_1_00_05_00/device_support/f2803x/common/source/DSP2803x_DefaultIsr.c"   ==&gt; LVF_ISR</div>
<div class="cl" style="top:655px">   "C:/ti/c2000/C2000Ware_1_00_05_00/device_support/f2803x/common/source/DSP2803x_DefaultIsr.c"   ==&gt; LUF_ISR</div>
<div class="cl" style="top:670px">   "C:/ti/c2000/C2000Ware_1_00_05_00/device_support/f2803x/common/source/DSP2803x_DefaultIsr.c"   ==&gt; EMPTY_ISR</div>
<div class="cl" style="top:685px">   "C:/ti/c2000/C2000Ware_1_00_05_00/device_support/f2803x/common/source/DSP2803x_DefaultIsr.c"   ==&gt; PIE_RESERVED</div>
<div class="cl" style="top:700px">   "C:/ti/c2000/C2000Ware_1_00_05_00/device_support/f2803x/common/source/DSP2803x_DefaultIsr.c"   ==&gt; rsvd_ISR</div>
<div class="cl" style="top:715px">Finished building: "C:/ti/c2000/C2000Ware_1_00_05_00/device_support/f2803x/common/source/DSP2803x_DefaultIsr.c"</div>
<div class="cl" style="top:745px">Building file: "C:/ti/c2000/C2000Ware_1_00_05_00/device_support/f2803x/headers/source/DSP2803x_GlobalVariableDefs.c"</div>
<div class="cl" style="top:760px">Invoking: C2000 Compiler</div>
<div class="cl" style="top:775px">"C:/ti/ccsv8/tools/compiler/ti-cgt-c2000_18.1.5.LTS/bin/cl2000" -v28 -ml -mt --cla_support=cla0</div>
<div class="cl" style="top:790px">--include_path="C:/ti/ccsv8/tools/compiler/ti-cgt-c2000_18.1.5.LTS/include"</div>
<div class="cl" style="top:805px">--include_path="C:/ti/c2000/C2000Ware_1_00_05_00/device_support/f2803x/headers/include"</div>
<div class="cl" style="top:820px">--include_path="C:/ti/c2000/C2000Ware_1_00_05_00/device_support/f2803x/common/include"</div>
<div class="cl" style="top:835px">--include_path="C:/ti/c2000/C2000Ware_1_00_05_00/libraries/math/IQmath/c28/include" --advice:performance=all --define="_DEBUG" --define="LARGE_MODEL" -g</div>
<div class="cl" style="top:850px">--diag_suppress=10063 --diag_warning=225 --issue_remarks --verbose_diagnostics --verbose --preproc_with_compile</div>
<div class="cl" style="top:865px">--preproc_dependency="DSP2803x_GlobalVariableDefs.d_raw"  "C:/ti/c2000/C2000Ware_1_00_05_00/device_support/f2803x/headers/source/DSP2803x_GlobalVariableDefs.c"</div>
<div class="cl" style="top:880px">TMS320C2000 C/C++ Compiler              v18.1.5.LTS</div>
<div class="cl" style="top:895px">Tools Copyright (c) 1996-2018 Texas Instruments Incorporated</div>
<div class="cl" style="top:910px">Finished building: "C:/ti/c2000/C2000Ware_1_00_05_00/device_support/f2803x/headers/source/DSP2803x_GlobalVariableDefs.c"</div>
</div></div>

<!-- v scrollbar -->
<div class="a dither" style="left:1412px;top:561px;width:16px;height:392px"></div>
<div class="sb" style="left:1412px;top:561px;width:16px;height:16px"><svg style="left:3px;top:4px" width="8" height="5" viewBox="0 0 8 5"><path d="M0 4.5 H8 L4 0.5 Z" fill="#000"/></svg></div>
<div class="sb" style="left:1412px;top:859px;width:16px;height:78px"></div>
<div class="sb" style="left:1412px;top:937px;width:16px;height:16px"><svg style="left:3px;top:5px" width="8" height="5" viewBox="0 0 8 5"><path d="M0 0.5 H8 L4 4.5 Z" fill="#000"/></svg></div>

<!-- STATUS BAR -->
<div class="grip" style="left:1141px;top:962px"></div>
<div class="t" style="left:1146px;top:965px;font-size:11px;color:#000">Building project(s): (47%)</div>
<div class="a" style="left:1330px;top:963px;width:30px;height:14px;background:#d4d0c8;border-top:1px solid #808080;border-left:1px solid #808080;border-right:1px solid #fff;border-bottom:1px solid #fff"></div>
<div class="a" style="left:1332px;top:965px;width:3px;height:10px;background:#0a246a"></div>
<svg style="left:1366px;top:964px" width="16" height="12" viewBox="0 0 16 12">
 <rect x="0.5" y="0.5" width="10" height="6" fill="#d8f0e0" stroke="#a89880"/>
 <rect x="2.5" y="2.5" width="10" height="6" fill="#d8f0e0" stroke="#a89880"/>
 <rect x="4.5" y="4.5" width="11" height="7" fill="#e0f0f8" stroke="#7a8aa0"/>
 <rect x="5" y="6" width="6" height="5" fill="#40b040"/>
 <rect x="6" y="7.5" width="3" height="1.5" fill="#d8f0d8"/>
</svg>
<div class="grip g2" style="left:1396px;top:963px"></div>
<div class="grip g2" style="left:1415px;top:963px"></div>


</body></html>
